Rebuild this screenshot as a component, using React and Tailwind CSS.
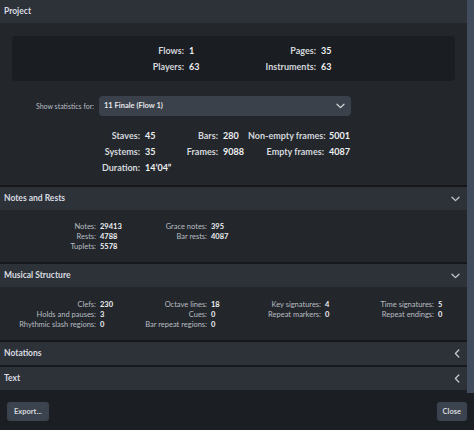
import React from 'react';

const ChevronDown = ({ className = '' }) => (
  <svg width="9" height="6" viewBox="0 0 9 6" className={className}>
    <path d="M1 1.2 L4.5 4.6 L8 1.2" fill="none" stroke="currentColor" strokeWidth="1.3" strokeLinecap="round" strokeLinejoin="round" />
  </svg>
);

const ChevronLeft = ({ className = '' }) => (
  <svg width="6" height="9" viewBox="0 0 6 9" className={className}>
    <path d="M4.8 1 L1.4 4.5 L4.8 8" fill="none" stroke="currentColor" strokeWidth="1.3" strokeLinecap="round" strokeLinejoin="round" />
  </svg>
);

function SectionHeader({ title, open }) {
  return (
    <div className="h-[23px] flex items-center justify-between bg-[#2d3239] pl-[4px] pr-[7px]">
      <span className="text-[8.5px] font-bold text-[#d9dce0]">{title}</span>
      {open === true && <ChevronDown className="text-[#c3c7cc]" />}
      {open === false && <ChevronLeft className="text-[#c3c7cc]" />}
    </div>
  );
}

const Divider = () => <div className="h-[2px] bg-[#16181b]" />;

export default function App() {
  const notesRows = [
    ['Notes:', '29413', 'Grace notes:', '395'],
    ['Rests:', '4788', 'Bar rests:', '4087'],
    ['Tuplets:', '5578', '', ''],
  ];

  const structureRows = [
    ['Clefs:', '230', 'Octave lines:', '18', 'Key signatures:', '4', 'Time signatures:', '5'],
    ['Holds and pauses:', '3', 'Cues:', '0', 'Repeat markers:', '0', 'Repeat endings:', '0'],
    ['Rhythmic slash regions:', '0', 'Bar repeat regions:', '0', '', '', '', ''],
  ];

  const flowStats = [
    ['Staves:', '45', 'Bars:', '280', 'Non-empty frames:', '5001'],
    ['Systems:', '35', 'Frames:', '9088', 'Empty frames:', '4087'],
    ['Duration:', '14\u201904\u201d', '', '', '', ''],
  ];

  return (
    <div
      className="w-[474px] h-[430px] flex flex-col bg-[#1b1e22] overflow-hidden"
      style={{ fontFamily: 'Lato, "Noto Sans", sans-serif' }}
    >
      <div className="h-[393px] flex">
        <div className="flex-1 flex flex-col bg-[#1b1e22]">
          {/* Project */}
          <SectionHeader title="Project" />
          <div className="h-[162px] bg-[#23272c] pt-[13px]">
            <div className="mx-[12px] h-[45px] rounded-[4px] bg-[#1a1d21] pt-[7px]">
              <div className="grid grid-cols-[172px_60px_62px_auto] gap-x-[5px] text-[9px] leading-[16px] font-bold whitespace-nowrap">
                <span className="text-right text-[#d4d7dc]">Flows:</span>
                <span className="text-[#eef0f2]">1</span>
                <span className="text-right text-[#d4d7dc]">Pages:</span>
                <span className="text-[#eef0f2]">35</span>
                <span className="text-right text-[#d4d7dc]">Players:</span>
                <span className="text-[#eef0f2]">63</span>
                <span className="text-right text-[#d4d7dc]">Instruments:</span>
                <span className="text-[#eef0f2]">63</span>
              </div>
            </div>

            <div className="mt-[15px] flex items-center">
              <span className="w-[94px] text-right text-[7px] text-[#b9bdc3] whitespace-nowrap">Show statistics for:</span>
              <div className="ml-[5px] w-[252px] h-[20px] rounded-[4px] bg-[#3a414b] flex items-center justify-between pl-[5px] pr-[6px]">
                <span className="text-[7.5px] font-bold text-[#e6e8eb]">11 Finale (Flow 1)</span>
                <ChevronDown className="text-[#d0d3d8]" />
              </div>
            </div>

            <div className="mt-[12px] grid grid-cols-[140px_35px_33px_20px_76px_auto] gap-x-[5px] text-[9px] leading-[16px] font-bold whitespace-nowrap">
              {flowStats.map((row, i) =>
                row.map((cell, j) => (
                  <span
                    key={`${i}-${j}`}
                    className={j % 2 === 0 ? 'text-right text-[#d4d7dc]' : 'text-[#eef0f2]'}
                  >
                    {cell}
                  </span>
                ))
              )}
            </div>
          </div>
          <Divider />

          {/* Notes and Rests */}
          <SectionHeader title="Notes and Rests" open={true} />
          <div className="h-[52px] bg-[#23272c] pt-[12px]">
            <div className="grid grid-cols-[96px_30px_73px_auto] gap-x-[4px] text-[7.5px] leading-[10px] whitespace-nowrap">
              {notesRows.map((row, i) =>
                row.map((cell, j) => (
                  <span
                    key={`${i}-${j}`}
                    className={j % 2 === 0 ? 'text-right text-[#b9bdc3]' : 'font-bold text-[#eceef1]'}
                  >
                    {cell}
                  </span>
                ))
              )}
            </div>
          </div>
          <Divider />

          {/* Musical Structure */}
          <SectionHeader title="Musical Structure" open={true} />
          <div className="h-[53px] bg-[#23272c] pt-[13px]">
            <div className="grid grid-cols-[96px_30px_73px_30px_76px_30px_75px_auto] gap-x-[4px] text-[7.5px] leading-[10px] whitespace-nowrap">
              {structureRows.map((row, i) =>
                row.map((cell, j) => (
                  <span
                    key={`${i}-${j}`}
                    className={j % 2 === 0 ? 'text-right text-[#b9bdc3]' : 'font-bold text-[#eceef1]'}
                  >
                    {cell}
                  </span>
                ))
              )}
            </div>
          </div>
          <Divider />

          <SectionHeader title="Notations" open={false} />
          <Divider />
          <SectionHeader title="Text" open={false} />
        </div>

        {/* scrollbar */}
        <div className="w-[7px] bg-[#414d5c]" />
      </div>

      {/* Footer */}
      <div className="flex-1 flex items-center justify-between px-[7px] bg-[#1b1e22]">
        <button className="h-[19px] px-[7px] rounded-[3px] bg-[#3b434e] text-[7.5px] font-bold text-[#d6d9dd]">
          Export...
        </button>
        <button className="h-[19px] px-[6px] rounded-[3px] bg-[#3b434e] text-[7.5px] font-bold text-[#d6d9dd]">
          Close
        </button>
      </div>
    </div>
  );
}
